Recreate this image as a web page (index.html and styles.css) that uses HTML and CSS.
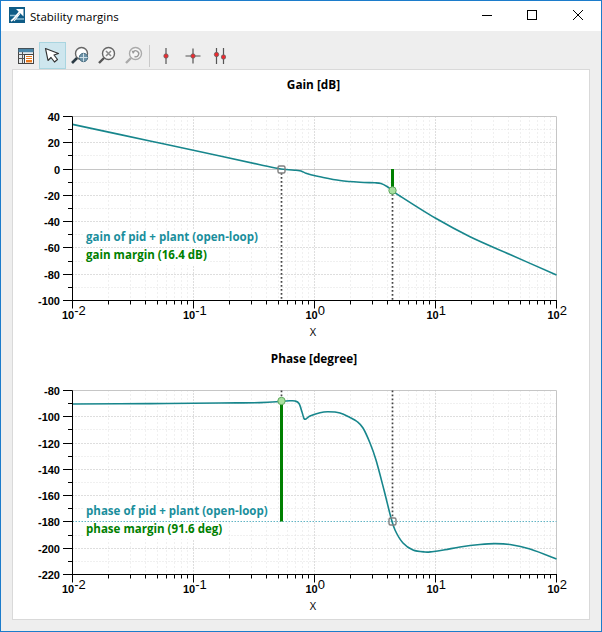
FILE: index.html
```html
<!DOCTYPE html>
<html lang="en">
<head>
<meta charset="utf-8">
<title>Stability margins</title>
<link rel="stylesheet" href="styles.css">
</head>
<body>
<div class="window">
  <header class="titlebar">
    <svg class="app-icon" width="16" height="16" viewBox="0 0 16 16">
      <rect width="16" height="16" fill="#0f5c86"/>
      <path d="M1 8.5 H9 M7 12 H15" fill="none" stroke="#8fbcd2" stroke-width="1.4"/>
      <path d="M2 14 C5 12 7 9 11 4.5" fill="none" stroke="#fff" stroke-width="1.8"/>
      <path d="M7 2 H14.5 V9.5 Z" fill="#fff"/>
      <path d="M5 14 L11 6.5" fill="none" stroke="#fff" stroke-width="1.2"/>
    </svg>
    <span class="window-title">Stability margins</span>
    <div class="controls">
      <svg class="ctl" width="46" height="30" viewBox="0 0 46 30"><path d="M19 14.5 H29" stroke="#000" fill="none"/></svg>
      <svg class="ctl" width="46" height="30" viewBox="0 0 46 30"><rect x="18.5" y="9.5" width="9" height="9" stroke="#000" fill="none"/></svg>
      <svg class="ctl" width="46" height="30" viewBox="0 0 46 30"><path d="M18 9 L28 19 M28 9 L18 19" stroke="#000" fill="none"/></svg>
    </div>
  </header>

  <nav class="toolbar">
    <button class="tool">
      <svg width="20" height="20" viewBox="0 0 20 20">
        <rect x="2.5" y="2.5" width="15" height="15" fill="#e4e9ec" stroke="#444"/>
        <path d="M2.5 4.5 H17.5" stroke="#4a86a8" stroke-width="3.4"/>
        <path d="M2.5 8.5 H9 M2.5 12.5 H8 M6.5 6 V17" stroke="#555" fill="none"/>
        <rect x="8.5" y="8.5" width="9" height="9" fill="#fff" stroke="#444"/>
        <path d="M10 10.5 H16 M10 12.5 H16" stroke="#e8791e" stroke-width="1.1"/>
        <rect x="10" y="14" width="6" height="2.4" fill="#e8791e"/>
      </svg>
    </button>
    <button class="tool tool-active">
      <svg width="20" height="20" viewBox="0 0 20 20">
        <path d="M2.5 2.5 L5 14.5 L8 11.5 L11.5 16 L14.5 13.5 L11 9 L15.5 7.5 Z" fill="#fff" stroke="#333" stroke-width="1.2" stroke-linejoin="round"/>
      </svg>
    </button>
    <button class="tool">
      <svg width="20" height="20" viewBox="0 0 20 20">
        <circle cx="11.5" cy="7.5" r="6" fill="#fff" stroke="#666" stroke-width="1.4"/>
        <circle cx="13.5" cy="11.5" r="4.2" fill="#6d93a8" stroke="#4c6f82"/>
        <path d="M9.5 11.5 H17.5 M13.5 7.5 V15.5" stroke="#cfe0e8"/>
        <path d="M7 12 L2 17" stroke="#2b3a44" stroke-width="2.6"/>
      </svg>
    </button>
    <button class="tool">
      <svg width="20" height="20" viewBox="0 0 20 20">
        <circle cx="11.5" cy="7.5" r="6" fill="#f8f8f8" stroke="#666" stroke-width="1.4"/>
        <path d="M9 5 L14 10 M14 5 L9 10" stroke="#8a8a8a" stroke-width="1.6"/>
        <path d="M7 12 L2 17" stroke="#555" stroke-width="2.4"/>
      </svg>
    </button>
    <button class="tool">
      <svg width="20" height="20" viewBox="0 0 20 20">
        <circle cx="11.5" cy="7.5" r="6" fill="#f6f6f6" stroke="#aaa" stroke-width="1.4"/>
        <path d="M9 6.5 A3 3 0 1 1 10.5 10.5" fill="none" stroke="#999" stroke-width="1.4"/>
        <path d="M7.5 4.5 L9 8 L11 5.5 Z" fill="#999"/>
        <path d="M7 12 L2 17" stroke="#aaa" stroke-width="2.4"/>
      </svg>
    </button>
    <span class="separator"></span>
    <button class="tool">
      <svg width="20" height="20" viewBox="0 0 20 20">
        <path d="M10 2 V18" stroke="#555" stroke-width="1.2"/>
        <circle cx="10" cy="10" r="2.2" fill="#f0282e" stroke="#666" stroke-width=".8"/>
      </svg>
    </button>
    <button class="tool">
      <svg width="20" height="20" viewBox="0 0 20 20">
        <path d="M10 2.5 V17.5 M2.5 10 H17.5" stroke="#555" stroke-width="1.2"/>
        <circle cx="10" cy="10" r="2.2" fill="#f0282e" stroke="#666" stroke-width=".8"/>
      </svg>
    </button>
    <button class="tool">
      <svg width="20" height="20" viewBox="0 0 20 20">
        <path d="M6.5 2 V18 M13.5 2 V18" stroke="#555" stroke-width="1.2"/>
        <circle cx="6.5" cy="8.5" r="2.2" fill="#f0282e" stroke="#666" stroke-width=".8"/>
        <circle cx="13.5" cy="11" r="2.2" fill="#f0282e" stroke="#666" stroke-width=".8"/>
      </svg>
    </button>
  </nav>

  <main class="panel">
    <svg id="gain" class="chart chart-gain" width="576" height="276" viewBox="13 70 576 276"></svg>
    <svg id="phase" class="chart chart-phase" width="576" height="273" viewBox="13 346 576 273"></svg>
  </main>
</div>
<script src="script.js"></script>
</body>
</html>
```
FILE: styles.css
```css
* { box-sizing: border-box; }
html, body { margin: 0; padding: 0; }
body { width: 602px; height: 632px; overflow: hidden; font-family: "Open Sans", "Noto Sans", sans-serif; }

.window {
  width: 602px;
  height: 632px;
  display: flex;
  flex-direction: column;
  background: #eeeeee;
  border: 1px solid #1c7ccb;
}

.titlebar {
  height: 30px;
  flex: none;
  display: flex;
  align-items: center;
  background: #fff;
  padding-left: 8px;
}
.app-icon { flex: none; margin-top: -2px; }
.window-title { margin-left: 5px; font-size: 11.5px; color: #000; }
.controls { margin-left: auto; display: flex; }
.ctl { display: block; }

.toolbar {
  height: 38px;
  flex: none;
  display: flex;
  align-items: flex-end;
  padding-left: 11px;
  gap: 0;
}
.tool {
  width: 27px;
  height: 27px;
  padding: 0;
  margin: 0;
  display: flex;
  align-items: center;
  justify-content: center;
  background: transparent;
  border: 1px solid transparent;
}
.tool-active { background: #cee6ee; border-color: #a9d5e0; }
.separator {
  width: 1px;
  height: 22px;
  margin: 0 2px 2px 2px;
  background: #c9c9c9;
}

.panel {
  width: 578px;
  height: 551px;
  margin-left: 11px;
  flex: none;
  background: #fff;
  border: 1px solid #d9d9d9;
}
.chart { display: block; }

.tick-label { font: bold 11px "Liberation Sans", Arial, sans-serif; fill: #000; }
.tick-sup { font-size: 13px; font-weight: normal; }
.plot-title { font: bold 11.8px "Open Sans", "Noto Sans", sans-serif; fill: #000; text-anchor: middle; }
.axis-name { font: 11px "Open Sans", "Noto Sans", sans-serif; fill: #000; text-anchor: middle; }
.legend { font: bold 11.55px "Open Sans", "Noto Sans", sans-serif; }
.legend-teal { fill: #1a8e9c; }
.legend-green { fill: #008000; }
```
FILE: script.js
```js
var SVGNS = 'http://www.w3.org/2000/svg';
var X0 = 72.5, DEC = 121, XEND = 556.5;

function el(parent, name, attrs, text) {
  var n = document.createElementNS(SVGNS, name);
  for (var k in attrs) n.setAttribute(k, attrs[k]);
  if (text !== undefined) n.textContent = text;
  parent.appendChild(n);
  return n;
}
function line(p, x1, y1, x2, y2, stroke, extra) {
  var a = { x1: x1, y1: y1, x2: x2, y2: y2, stroke: stroke, fill: 'none' };
  for (var k in extra) a[k] = extra[k];
  return el(p, 'line', a);
}
function smooth(pts) {
  var d = 'M' + pts[0][0] + ' ' + pts[0][1];
  for (var i = 0; i < pts.length - 1; i++) {
    var p0 = pts[i - 1] || pts[i], p1 = pts[i], p2 = pts[i + 1], p3 = pts[i + 2] || p2;
    d += ' C' + (p1[0] + (p2[0] - p0[0]) / 6).toFixed(2) + ' ' + (p1[1] + (p2[1] - p0[1]) / 6).toFixed(2) +
         ' ' + (p2[0] - (p3[0] - p1[0]) / 6).toFixed(2) + ' ' + (p2[1] - (p3[1] - p1[1]) / 6).toFixed(2) +
         ' ' + p2[0] + ' ' + p2[1];
  }
  return d;
}

function plot(cfg) {
  var s = document.getElementById(cfg.id);
  var top = cfg.top, bot = top + 184;
  var yOf = function (v) { return Math.floor(top + (cfg.max - v) * 184 / 140) + .5; };
  var hDots = { 'stroke-dasharray': '1 2' };
  var vMinor = { 'stroke-dasharray': '1 3' };

  // horizontal grid
  for (var v = cfg.max - 10; v > cfg.min; v -= 10) {
    var y = yOf(v);
    if (y === cfg.refY) continue;
    line(s, X0, y, XEND, y, v % 20 === 0 ? '#bdbdbd' : '#e0e0e0', hDots);
  }
  // vertical grid
  for (var d = 0; d < 4; d++) {
    for (var m = 2; m <= 10; m++) {
      if (m === 10 && d === 3) continue;
      var x = Math.floor(X0 + DEC * (d + Math.log10(m))) + .5;
      line(s, x, top, x, bot, m === 10 ? '#bdbdbd' : '#e0e0e0', m === 10 ? hDots : vMinor);
    }
  }
  // frame
  line(s, X0, top, XEND, top, '#c6c6c6');
  line(s, XEND, top, XEND, bot, '#c6c6c6');
  if (cfg.zeroLine) line(s, X0, 169.5, XEND, 169.5, '#c6c6c6');

  // reference lines
  var dots = { 'stroke-width': 1.7, 'stroke-dasharray': '1.7 2.3' };
  cfg.dotted.forEach(function (l) { line(s, l[0], l[1], l[0], l[2], '#444', dots); });
  if (cfg.refY) line(s, X0, cfg.refY, XEND, cfg.refY, '#62b4c4', { 'stroke-dasharray': '1.5 1.5', 'stroke-width': 1 });

  // legend backgrounds
  cfg.legend.forEach(function (g) {
    el(s, 'rect', { x: g.x - 3, y: g.y - 11, width: g.w, height: 17, fill: '#fff' });
  });

  // margin bar and curve
  line(s, cfg.bar[0], cfg.bar[1], cfg.bar[0], cfg.bar[2], '#008000', { 'stroke-width': 3 });
  el(s, 'path', { d: smooth(cfg.curve), fill: 'none', stroke: '#17868c', 'stroke-width': 1.6 });

  // markers
  el(s, 'rect', { x: cfg.square[0] - 3.5, y: cfg.square[1] - 3.5, width: 7, height: 7, rx: 1.5, fill: 'none', stroke: '#808080', 'stroke-width': 1.4 });
  el(s, 'circle', { cx: cfg.dot[0], cy: cfg.dot[1], r: 3.7, fill: '#a8e0a0', stroke: '#5fa85f', 'stroke-width': 1 });

  // axes
  line(s, X0, top, X0, bot + .5, '#000');
  line(s, X0, bot, XEND + .5, bot, '#000');

  // y ticks
  for (v = cfg.max; v >= cfg.min; v -= 10) {
    y = yOf(v);
    var isMaj = v % 20 === 0;
    line(s, isMaj ? 63 : 68, y, X0, y, '#000');
    if (isMaj) el(s, 'text', { x: 60, y: y + 4, 'text-anchor': 'end', 'class': 'tick-label' }, String(v));
  }
  // x ticks
  for (d = 0; d < 4; d++) {
    for (m = 1; m <= 9; m++) {
      x = Math.floor(X0 + DEC * (d + Math.log10(m))) + .5;
      line(s, x, bot, x, bot + (m === 1 ? 8 : 4), '#000');
    }
  }
  line(s, XEND, bot, XEND, bot + 8, '#000');
  ['-2', '-1', '0', '1', '2'].forEach(function (e, i) {
    var cx = X0 + DEC * i;
    var t = el(s, 'text', { x: cx - (e.length > 1 ? 10.5 : 9), y: bot + 18.5, 'class': 'tick-label' }, '10');
    el(t, 'tspan', { dy: -4, 'class': 'tick-sup' }, e);
  });

  el(s, 'text', { x: cfg.titleX, y: cfg.titleY, 'class': 'plot-title' }, cfg.title);
  el(s, 'text', { x: 313, y: bot + 35.5, 'class': 'axis-name' }, 'X');

  cfg.legend.forEach(function (g) {
    el(s, 'text', { x: g.x, y: g.y, 'class': 'legend ' + g.cls }, g.text);
  });
}

plot({
  id: 'gain', top: 116.5, max: 40, min: -100, zeroLine: true,
  title: 'Gain [dB]', titleX: 313.5, titleY: 89,
  dotted: [[281.5, 173, 300], [392.5, 194, 300]],
  bar: [392.5, 169, 190],
  square: [281.5, 169.5], dot: [392.5, 190.5],
  legend: [
    { x: 86, y: 241, w: 178, text: 'gain of pid + plant (open-loop)', cls: 'legend-teal' },
    { x: 86, y: 259, w: 125, text: 'gain margin (16.4 dB)', cls: 'legend-green' }
  ],
  curve: [[72.5, 124.4], [150, 141], [220, 156], [260, 164.7], [281, 169], [296, 170.3], [301, 171], [306, 173.3],
          [312, 175], [320, 176.8], [340, 180.5], [360, 182.3], [375, 182.8], [381, 183.6], [387, 186.5],
          [392.5, 190.5], [400, 196], [435.7, 218.3], [470, 236.7], [510, 254.5], [556.5, 275]]
});

plot({
  id: 'phase', top: 390.5, max: -80, min: -220,
  title: 'Phase [degree]', titleX: 314, titleY: 363,
  dotted: [[281.5, 390.5, 397], [392.5, 390.5, 517]],
  refY: 521.5,
  bar: [281.5, 401, 521.5],
  square: [392.5, 521.5], dot: [281.5, 401],
  legend: [
    { x: 86, y: 515, w: 186, text: 'phase of pid + plant (open-loop)', cls: 'legend-teal' },
    { x: 86, y: 533, w: 145, text: 'phase margin (91.6 deg)', cls: 'legend-green' }
  ],
  curve: [[72.5, 404], [150, 403.6], [220, 403], [260, 402.6], [281, 401.4], [290, 400.8], [295, 401], [299, 403.5], [302, 412],
          [304, 418.5], [306, 419], [310, 416], [320, 412.7], [328, 411.8], [340, 413], [350, 417.5], [357, 421.5], [363, 428],
          [370, 443], [376, 460], [384, 490], [390.7, 516.7], [395, 530], [403, 543], [413, 550], [425, 552], [432, 551.7],
          [445, 549.8], [460, 547], [480, 544.5], [495, 543.6], [510, 544.5], [530, 549], [556.5, 559]]
});
```
